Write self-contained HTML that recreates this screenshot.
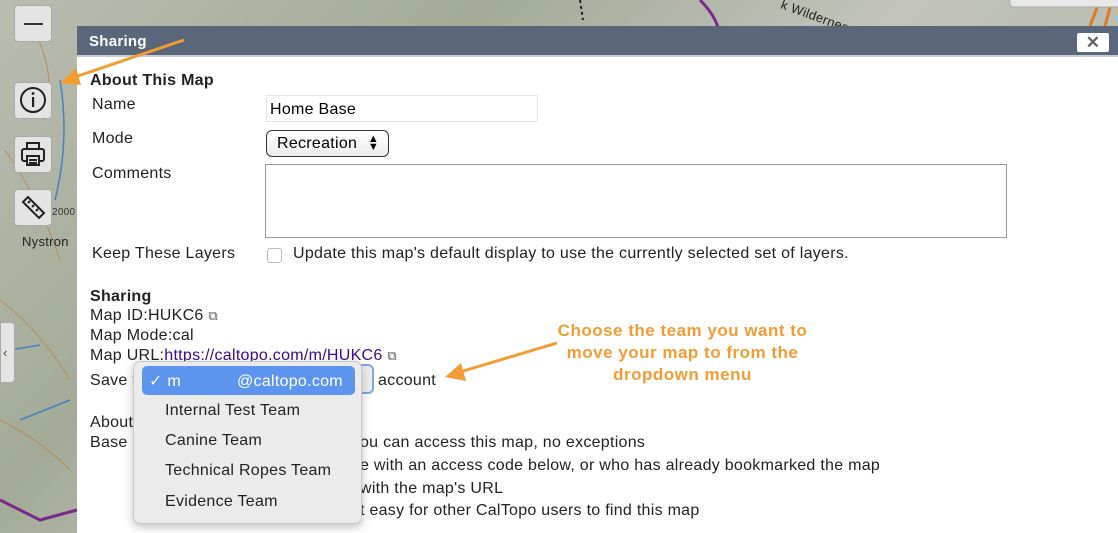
<!DOCTYPE html>
<html><head><meta charset="utf-8"><style>
*{margin:0;padding:0;box-sizing:border-box}
body{width:1118px;height:533px;overflow:hidden;position:relative;font-family:"Liberation Sans",sans-serif;background:#aeb3a4;letter-spacing:0.28px}
.map{position:absolute;inset:0;background:linear-gradient(135deg,#b9bdb0 0%,#a3ab98 30%,#c2c4bb 55%,#aab09f 100%);}
.btn{position:absolute;left:14px;width:38px;height:37px;background:#e4e4e4;border:1px solid #aaa;border-radius:4px;}
.dlg{position:absolute;left:77px;top:26px;width:1041px;height:507px;background:#fff;}
.hd{height:31px;background:#5a6679;border-bottom:2px solid #c9cdd3;color:#fff;font-weight:bold;font-size:15px;padding:7px 0 0 12px;}
.x{position:absolute;right:9px;top:7px;width:32px;height:19px;background:#fff;border-radius:2px;color:#666;font-weight:bold;font-size:17px;text-align:center;line-height:19px}
.t{position:absolute;font-size:16px;color:#222;white-space:nowrap}
.b{font-weight:bold}
.ann{position:absolute;color:#f39c34;font-weight:bold;font-size:17px;text-align:center;line-height:22px;letter-spacing:0.5px}
.dd{position:absolute;left:133px;top:361px;width:229px;height:163px;background:#ebebeb;border:1px solid #c8c8c8;border-radius:7px;box-shadow:0 3px 10px rgba(0,0,0,.25)}
.dd div{position:absolute;left:31px;font-size:16px;color:#222}
</style></head><body>
<div class="map">
<svg width="1118" height="533" style="position:absolute;left:0;top:0" fill="none">
<path d="M700 0 Q720 20 720 40" stroke="#7a2a8a" stroke-width="3"/>
<path d="M0 500 L40 520 L77 510" stroke="#7a2a8a" stroke-width="3"/>
<path d="M60 80 Q70 140 55 200" stroke="#4a7fc0" stroke-width="1.5"/>
<path d="M10 350 L40 345 M20 420 L70 400" stroke="#4a7fc0" stroke-width="1.5"/>
<path d="M20 10 Q60 60 45 120 M5 150 Q40 200 60 260 M0 300 Q40 330 70 380 M0 420 Q40 440 70 470" stroke="#b88a5a" stroke-width="1"/>
<path d="M580 0 L583 20" stroke="#222" stroke-width="2" stroke-dasharray="3 3"/>
<path d="M1090 26 L1100 0 M1105 26 L1112 0" stroke="#e07a20" stroke-width="3"/>
<rect x="1010" y="-5" width="110" height="12" rx="3" fill="#e8e8e8" stroke="#aaa"/>
<text x="780" y="8" font-size="13" fill="#222" font-family="Liberation Sans" transform="rotate(20 780 8)">k Wilderness Area</text>
</svg>
<div style="position:absolute;left:22px;top:234px;font-size:13px;color:#222">Nystron</div>
<div style="position:absolute;left:52px;top:207px;font-size:10px;color:#333">2000</div>
</div>
<div class="btn" style="top:5px"><div style="position:absolute;left:9px;top:17px;width:19px;height:2px;background:#333"></div></div>
<div class="btn" style="top:82px"><svg width="36" height="35"><circle cx="18" cy="17" r="12" stroke="#222" stroke-width="2" fill="none"/><rect x="17" y="14" width="2.2" height="10" fill="#222"/><circle cx="18" cy="10.5" r="1.4" fill="#222"/></svg></div>
<div class="btn" style="top:136px"><svg width="36" height="35" fill="none" stroke="#222" stroke-width="2"><rect x="12" y="6" width="12" height="6"/><rect x="7" y="12" width="22" height="12" rx="2"/><rect x="12" y="19" width="12" height="9" fill="#e4e4e4"/><path d="M14 23h8M14 26h8"/></svg></div>
<div class="btn" style="top:189px"><svg width="36" height="35" fill="none" stroke="#222" stroke-width="2"><path d="M8 12 L13 7 L29 23 L24 28 Z"/><path d="M13 13l2-2M17 17l2-2M21 21l2-2"/></svg></div>
<div style="position:absolute;left:0;top:322px;width:15px;height:61px;background:#e4e4e4;border:1px solid #aaa;border-radius:0 4px 4px 0;font-size:13px;color:#444;padding:22px 0 0 2px">&lsaquo;</div>

<div class="dlg">
<div class="hd">Sharing</div><div class="x">✕</div>
</div>
<div class="t b" style="left:90px;top:72px">About This Map</div>
<div class="t" style="left:92px;top:96px">Name</div>
<div style="position:absolute;left:266px;top:95px;width:272px;height:27px;border:1px solid #e4e4e4;font-size:16px;padding:5px 3px">Home Base</div>
<div class="t" style="left:92px;top:130px">Mode</div>
<div style="position:absolute;left:266px;top:130px;width:123px;height:27px;border:1px solid #333;border-radius:6px;background:linear-gradient(#fff,#ececec);font-size:16px;padding:4px 10px">Recreation <span style="position:absolute;right:9px;top:4px;font-size:11px;line-height:8px">▲<br>▼</span></div>
<div class="t" style="left:92px;top:165px">Comments</div>
<div style="position:absolute;left:265px;top:164px;width:742px;height:74px;border:1px solid #999"></div>
<div class="t" style="left:92px;top:245px">Keep These Layers</div>
<div style="position:absolute;left:267px;top:248px;width:15px;height:15px;border:1px solid #bbb;border-radius:3px"></div>
<div class="t" style="left:293px;top:245px">Update this map's default display to use the currently selected set of layers.</div>
<div class="t b" style="left:90px;top:288px">Sharing</div>
<div class="t" style="left:90px;top:307px">Map ID:HUKC6 <span style="font-size:13px;color:#555">⧉</span></div>
<div class="t" style="left:90px;top:327px">Map Mode:cal</div>
<div class="t" style="left:90px;top:347px">Map URL:<span style="color:#3a0c8a">https://caltopo.com/m/HUKC6</span> <span style="font-size:13px;color:#555">⧉</span></div>
<div class="t" style="left:90px;top:372px">Save t</div>
<div style="position:absolute;left:350px;top:364px;width:24px;height:30px;border:2px solid #7fa5e8;border-radius:6px;background:#eee"></div>
<div class="t" style="left:378px;top:372px">account</div>
<div class="t" style="left:90px;top:414px">About</div>
<div class="t" style="left:90px;top:434px">Base</div>
<div class="t" style="left:360px;top:434px">ou can access this map, no exceptions</div>
<div class="t" style="left:360px;top:457px">e with an access code below, or who has already bookmarked the map</div>
<div class="t" style="left:360px;top:480px">with the map's URL</div>
<div class="t" style="left:360px;top:502px">t easy for other CalTopo users to find this map</div>
<div class="dd">
<div style="left:8px;top:4px;width:213px;height:29px;background:#5d95ee;border-radius:5px;color:#fff;padding:5px 0 0 7px">✓ m<span style="margin-left:56px">@caltopo.com</span></div>
<div style="top:40px">Internal Test Team</div>
<div style="top:70px">Canine Team</div>
<div style="top:100px">Technical Ropes Team</div>
<div style="top:131px">Evidence Team</div>
</div>
<div class="ann" style="left:535px;top:320px;width:295px">Choose the team you want to<br>move your map to from the<br>dropdown menu</div>
<svg width="1118" height="533" style="position:absolute;left:0;top:0" fill="none">
<path d="M184 40 L72 78" stroke="#f39c34" stroke-width="3"/>
<path d="M60 83 L76 68 L81 85 Z" fill="#f39c34"/>
<path d="M557 343 L460 372" stroke="#f39c34" stroke-width="3"/>
<path d="M445 377 L461 363 L466 381 Z" fill="#f39c34"/>
</svg>
</body></html>
